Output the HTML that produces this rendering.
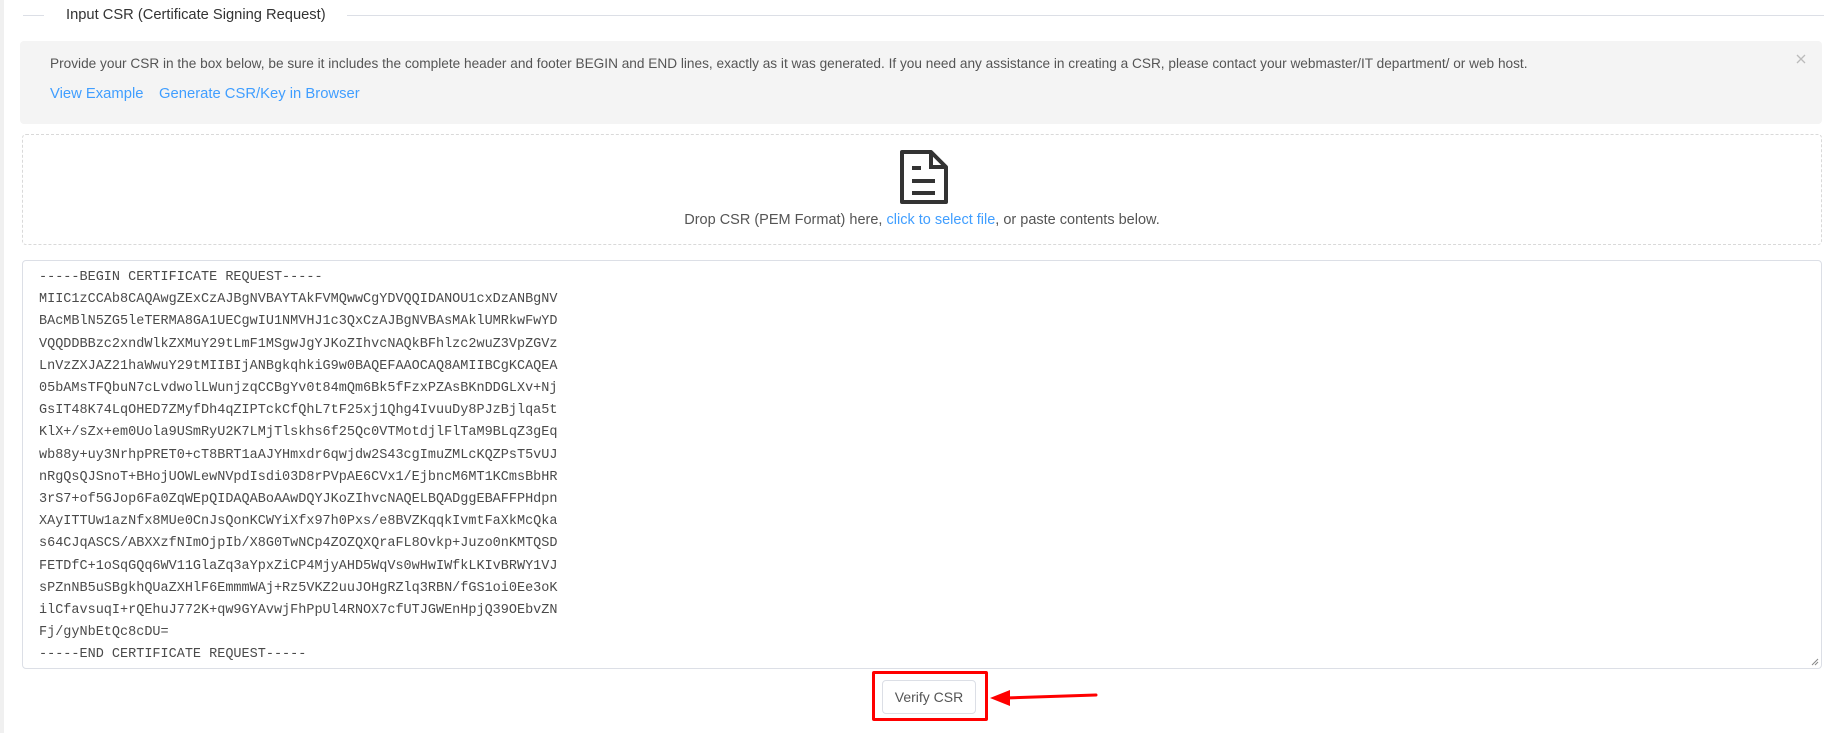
<!DOCTYPE html>
<html><head><meta charset="utf-8"><style>
*{box-sizing:border-box;margin:0;padding:0}
body{width:1824px;height:733px;background:#fff;font-family:"Liberation Sans",Arial,sans-serif;position:relative;overflow:hidden}
.abs{position:absolute}
.leg{left:66px;top:4px;font-size:14.7px;color:#333;line-height:22px}
.ln{height:1px;background:#dcdfe6;top:15px}
.info{left:20px;top:41px;width:1802px;height:83px;background:#f4f4f4;border-radius:4px}
.info p{position:absolute;left:30px;top:15px;font-size:13.65px;color:#555;white-space:nowrap}
.info .lk{position:absolute;top:45px;font-size:14.8px;color:#409eff}
.drop{left:22px;top:134px;width:1800px;height:111px;border:1px dashed #d9d9d9;border-radius:4px}
.drop .t{position:absolute;left:0;right:0;top:77px;text-align:center;font-size:14.5px;color:#555}
.ta{left:22px;top:260px;width:1800px;height:409px;border:1px solid #dcdfe6;border-radius:4px}
.ta pre{position:absolute;left:16px;top:6px;font-family:"Liberation Mono",monospace;font-size:13.5px;line-height:22.2px;color:#4a4a4a}
.btn{left:882px;top:680px;width:94px;height:34px;border:1px solid #dcdfe6;border-radius:4px;font-size:14px;color:#555;text-align:center;line-height:32px}
.red{left:872px;top:671px;width:116px;height:50px;border:3px solid #f00;border-radius:2px}
</style></head><body>
<div class="abs" style="left:0;top:0;width:4px;height:733px;background:#f0f0f0"></div>
<div class="abs ln" style="left:23px;width:21px"></div>
<div class="abs leg">Input CSR (Certificate Signing Request)</div>
<div class="abs ln" style="left:347px;width:1477px"></div>
<div class="abs info">
<p>Provide your CSR in the box below, be sure it includes the complete header and footer BEGIN and END lines, exactly as it was generated. If you need any assistance in creating a CSR, please contact your webmaster/IT department/ or web host.</p>
<span class="lk" style="left:30px">View Example</span>
<span class="lk" style="left:139px">Generate CSR/Key in Browser</span>
<svg class="abs" style="left:1775px;top:12px" width="12" height="12" viewBox="0 0 12 12"><path d="M2 2L10 10M10 2L2 10" stroke="#bbb" stroke-width="1.3"/></svg>
</div>
<div class="abs drop">
<svg class="abs" style="left:876px;top:14px" width="50" height="56" viewBox="0 0 50 56"><path d="M3 3H32L47 18V53H3Z" fill="none" stroke="#333" stroke-width="4" stroke-linejoin="round"/><path d="M32 3V18H47" fill="none" stroke="#333" stroke-width="4"/><path d="M13 19h9M13 32h23M13 44h23" stroke="#333" stroke-width="4"/></svg>
<div class="t">Drop CSR (PEM Format) here, <span style="color:#409eff">click to select file</span>, or paste contents below.</div>
</div>
<div class="abs ta"><pre>-----BEGIN CERTIFICATE REQUEST-----
MIIC1zCCAb8CAQAwgZExCzAJBgNVBAYTAkFVMQwwCgYDVQQIDANOU1cxDzANBgNV
BAcMBlN5ZG5leTERMA8GA1UECgwIU1NMVHJ1c3QxCzAJBgNVBAsMAklUMRkwFwYD
VQQDDBBzc2xndWlkZXMuY29tLmF1MSgwJgYJKoZIhvcNAQkBFhlzc2wuZ3VpZGVz
LnVzZXJAZ21haWwuY29tMIIBIjANBgkqhkiG9w0BAQEFAAOCAQ8AMIIBCgKCAQEA
05bAMsTFQbuN7cLvdwolLWunjzqCCBgYv0t84mQm6Bk5fFzxPZAsBKnDDGLXv+Nj
GsIT48K74LqOHED7ZMyfDh4qZIPTckCfQhL7tF25xj1Qhg4IvuuDy8PJzBjlqa5t
KlX+/sZx+em0Uola9USmRyU2K7LMjTlskhs6f25Qc0VTMotdjlFlTaM9BLqZ3gEq
wb88y+uy3NrhpPRET0+cT8BRT1aAJYHmxdr6qwjdw2S43cgImuZMLcKQZPsT5vUJ
nRgQsQJSnoT+BHojUOWLewNVpdIsdi03D8rPVpAE6CVx1/EjbncM6MT1KCmsBbHR
3rS7+of5GJop6Fa0ZqWEpQIDAQABoAAwDQYJKoZIhvcNAQELBQADggEBAFFPHdpn
XAyITTUw1azNfx8MUe0CnJsQonKCWYiXfx97h0Pxs/e8BVZKqqkIvmtFaXkMcQka
s64CJqASCS/ABXXzfNImOjpIb/X8G0TwNCp4ZOZQXQraFL8Ovkp+Juzo0nKMTQSD
FETDfC+1oSqGQq6WV11GlaZq3aYpxZiCP4MjyAHD5WqVs0wHwIWfkLKIvBRWY1VJ
sPZnNB5uSBgkhQUaZXHlF6EmmmWAj+Rz5VKZ2uuJOHgRZlq3RBN/fGS1oi0Ee3oK
ilCfavsuqI+rQEhuJ772K+qw9GYAvwjFhPpUl4RNOX7cfUTJGWEnHpjQ39OEbvZN
Fj/gyNbEtQc8cDU=
-----END CERTIFICATE REQUEST-----</pre>
<svg class="abs" style="right:2px;bottom:2px" width="8" height="8"><path d="M7 1L1 7M7 4L4 7" stroke="#888"/></svg>
</div>
<div class="abs btn">Verify CSR</div>
<div class="abs red"></div>
<svg class="abs" style="left:988px;top:685px" width="112" height="24" viewBox="0 0 112 24"><path d="M108 10L18 13" stroke="#f00" stroke-width="3" stroke-linecap="round"/><path d="M2 13L22 5L22 21Z" fill="#f00"/></svg>
</body></html>
